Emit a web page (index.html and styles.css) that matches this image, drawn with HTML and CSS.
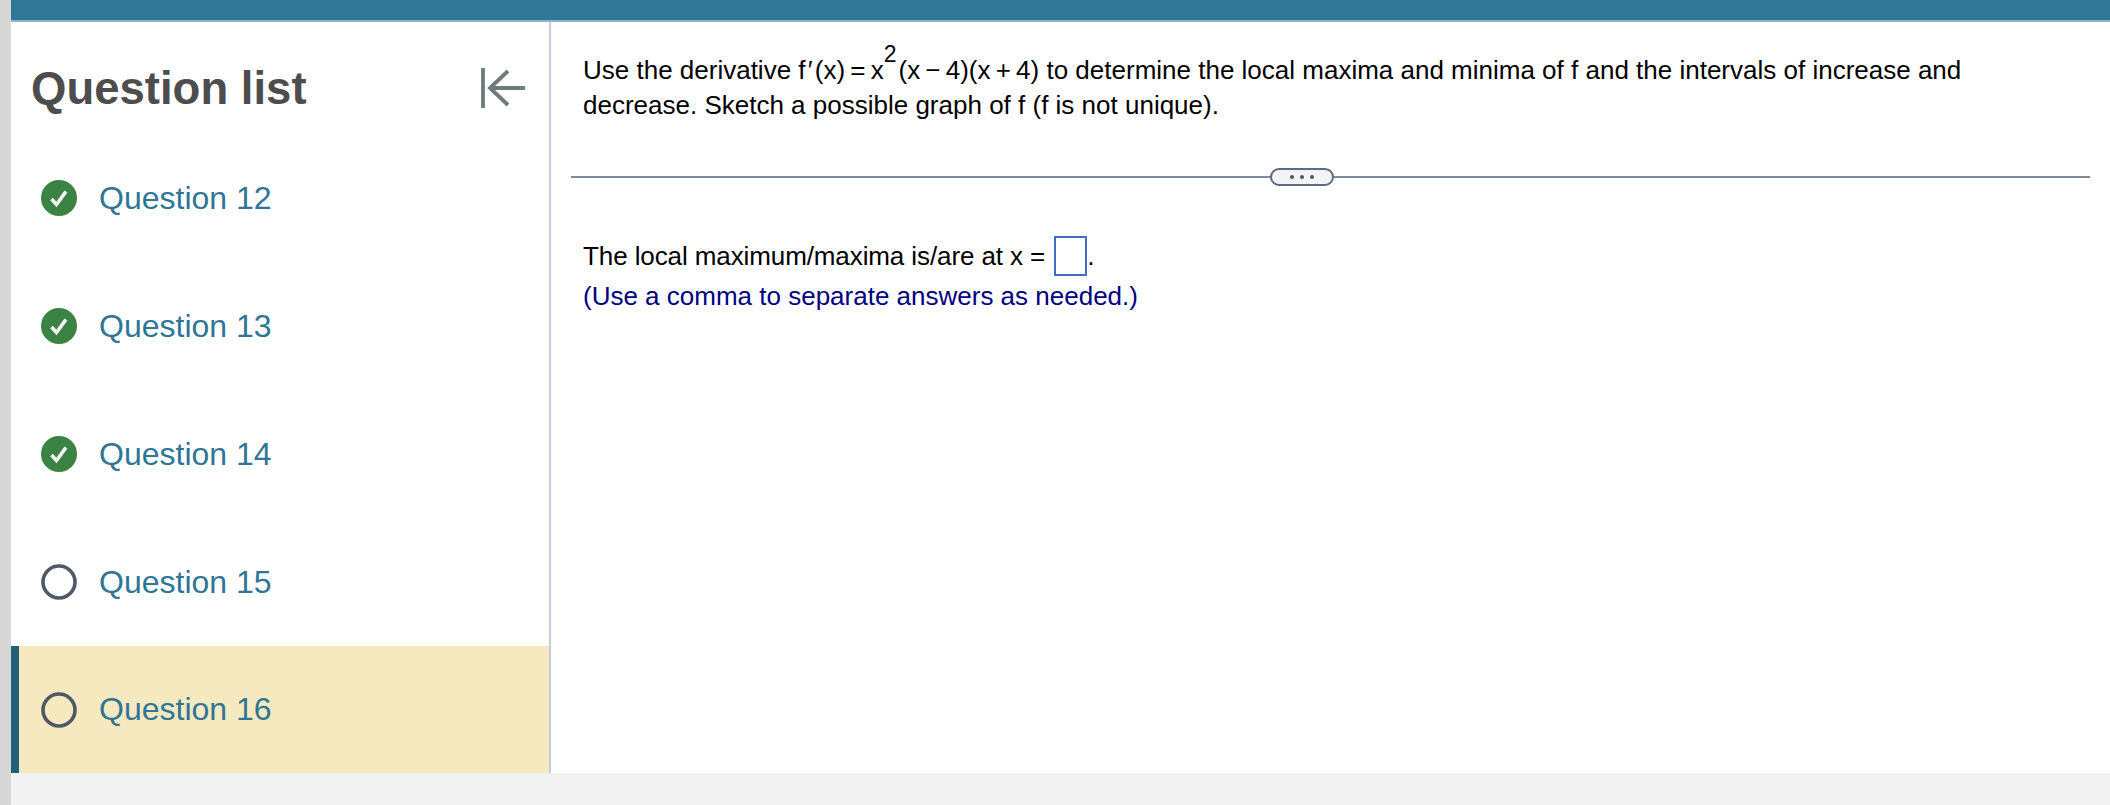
FILE: index.html
```html
<!DOCTYPE html>
<html lang="en">
<head>
<meta charset="utf-8">
<title>Question list</title>
<link rel="stylesheet" href="styles.css">
</head>
<body>
<div class="app">
  <div class="topbar"></div>
  <div class="workspace">
    <aside class="sidebar">
      <header class="side-head">
        <h1 class="side-title">Question list</h1>
        <svg class="collapse" viewBox="0 0 44 40" width="44" height="40" aria-hidden="true">
          <path d="M2 0V40M44 20H10M27 3L9 20L27 37" fill="none" stroke="#6f7a7c" stroke-width="3.8"/>
        </svg>
      </header>
      <ul class="qlist">
        <li class="qitem">
          <svg class="status" viewBox="0 0 36 36" width="36" height="36" aria-hidden="true"><circle cx="18" cy="18" r="18" fill="#3b8343"/><path d="M10.5 19L15.5 24.5L25 11.5" fill="none" stroke="#f4f8f4" stroke-width="3.6"/></svg>
          <span class="qname">Question 12</span>
        </li>
        <li class="qitem">
          <svg class="status" viewBox="0 0 36 36" width="36" height="36" aria-hidden="true"><circle cx="18" cy="18" r="18" fill="#3b8343"/><path d="M10.5 19L15.5 24.5L25 11.5" fill="none" stroke="#f4f8f4" stroke-width="3.6"/></svg>
          <span class="qname">Question 13</span>
        </li>
        <li class="qitem">
          <svg class="status" viewBox="0 0 36 36" width="36" height="36" aria-hidden="true"><circle cx="18" cy="18" r="18" fill="#3b8343"/><path d="M10.5 19L15.5 24.5L25 11.5" fill="none" stroke="#f4f8f4" stroke-width="3.6"/></svg>
          <span class="qname">Question 14</span>
        </li>
        <li class="qitem">
          <svg class="status" viewBox="0 0 36 36" width="36" height="36" aria-hidden="true"><circle cx="18" cy="18" r="16" fill="none" stroke="#4e5866" stroke-width="3.6"/></svg>
          <span class="qname">Question 15</span>
        </li>
        <li class="qitem qitem-current">
          <svg class="status" viewBox="0 0 36 36" width="36" height="36" aria-hidden="true"><circle cx="18" cy="18" r="16" fill="none" stroke="#4e5866" stroke-width="3.6"/></svg>
          <span class="qname">Question 16</span>
        </li>
      </ul>
    </aside>
    <main class="content">
      <p class="prompt">Use the derivative <span class="math">f&#8202;&#8242;&#8202;(x)&#8201;=&#8201;x<sup class="power">2</sup>(x&#8201;&#8722;&#8201;4)(x&#8201;+&#8201;4)</span> to determine the local maxima and minima of f and the intervals of increase and decrease. Sketch a possible graph of f (f is not unique).</p>
      <div class="divider"><button class="more" type="button" aria-label="More"><i></i><i></i><i></i></button></div>
      <p class="answer">The local maximum/maxima is/are at x = <span class="blank"></span>.</p>
      <p class="hint">(Use a comma to separate answers as needed.)</p>
    </main>
  </div>
  <div class="footer"></div>
</div>
</body>
</html>
```
FILE: styles.css
```css
* { box-sizing: border-box; }
html, body { margin: 0; padding: 0; }
body {
  width: 2110px;
  height: 805px;
  overflow: hidden;
  background: #d6d6d6;
  font-family: "Liberation Sans", Arial, sans-serif;
}
.app {
  margin-left: 11px;
  height: 805px;
  display: flex;
  flex-direction: column;
  background: #fff;
}
.topbar {
  height: 22px;
  flex: none;
  background: #317696;
  border-bottom: 2px solid #8fb6c8;
}
.workspace {
  height: 751px;
  flex: none;
  display: flex;
}
.sidebar {
  width: 540px;
  flex: none;
  border-right: 2px solid #c6ccdb;
  display: flex;
  flex-direction: column;
}
.side-head {
  height: 112px;
  flex: none;
  display: flex;
  align-items: center;
  justify-content: space-between;
  padding: 22px 24px 0 20px;
}
.side-title {
  margin: 0;
  font-size: 45.5px;
  font-weight: 700;
  color: #4d4d4d;
  line-height: 52px;
}
.collapse {
  flex: none;
  margin-top: -2px;
}
.qlist {
  list-style: none;
  margin: 0;
  padding: 0;
}
.qitem {
  height: 128px;
  display: flex;
  align-items: center;
  gap: 22px;
  padding-left: 30px;
}
.qitem-current {
  height: 127px;
  background: #f7e9bf;
  border-left: 8px solid #235e78;
  padding-left: 22px;
}
.status { flex: none; }
.qname {
  font-size: 32px;
  color: #2f7696;
}
.content {
  flex: 1;
  padding: 31px 20px 0 20px;
  color: #000;
}
.prompt {
  margin: 0 0 0 12px;
  max-width: 1390px;
  font-size: 26px;
  line-height: 35px;
}
.math { white-space: nowrap; }
.power {
  font-size: 23px;
  line-height: 0;
  vertical-align: 17px;
  margin-right: 2px;
}
.divider {
  margin-top: 45px;
  height: 18px;
  display: flex;
  align-items: center;
  background: linear-gradient(#7f8a9a, #7f8a9a) center / 100% 2px no-repeat;
}
.more {
  margin-left: 699px;
  width: 64px;
  height: 18px;
  padding: 0;
  display: flex;
  align-items: center;
  justify-content: center;
  gap: 6px;
  background: #f3f4f7;
  border: 2px solid #5d6b7e;
  border-radius: 9px;
}
.more i {
  width: 4px;
  height: 4px;
  border-radius: 50%;
  background: #4a5563;
}
.answer {
  margin: 50px 0 0 12px;
  font-size: 26px;
  line-height: 40px;
  height: 40px;
  display: flex;
  align-items: flex-end;
  white-space: pre;
  letter-spacing: -0.1px;
}
.blank {
  display: block;
  width: 33px;
  height: 40px;
  margin-left: 2px;
  border: 2px solid #3e6ec2;
  background: #fff;
}
.hint {
  margin: 3px 0 0 12px;
  font-size: 26px;
  line-height: 35px;
  color: #00007f;
}
.footer {
  flex: 1;
  background: #f2f2f2;
}
```
